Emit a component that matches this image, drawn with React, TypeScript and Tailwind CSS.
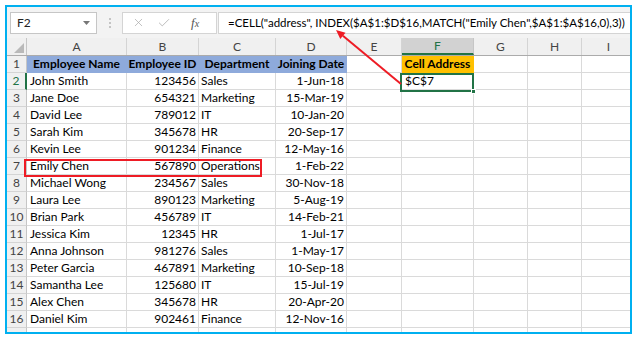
import React from "react";
import clsx from "clsx";
import { X, Check } from "lucide-react";

// Sheet data
const rows: [string, string, string, string][] = [
	["John Smith", "123456", "Sales", "1-Jun-18"],
	["Jane Doe", "654321", "Marketing", "15-Mar-19"],
	["David Lee", "789012", "IT", "10-Jan-20"],
	["Sarah Kim", "345678", "HR", "20-Sep-17"],
	["Kevin Lee", "901234", "Finance", "12-May-16"],
	["Emily Chen", "567890", "Operations", "1-Feb-22"],
	["Michael Wong", "234567", "Sales", "30-Nov-18"],
	["Laura Lee", "890123", "Marketing", "5-Aug-19"],
	["Brian Park", "456789", "IT", "14-Feb-21"],
	["Jessica Kim", "12345", "HR", "1-Jul-17"],
	["Anna Johnson", "981276", "Sales", "1-May-17"],
	["Peter Garcia", "467891", "Marketing", "10-Sep-18"],
	["Samantha Lee", "125680", "IT", "15-Jul-19"],
	["Alex Chen", "345678", "HR", "20-Apr-20"],
	["Daniel Kim", "902461", "Finance", "12-Nov-16"],
];

const letters = ["A", "B", "C", "D", "E", "F", "G", "H", "I"];
const colW = [
	"w-[100px]",
	"w-[72px]",
	"w-[77px]",
	"w-[71px]",
	"w-[55px]",
	"w-[72px]",
	"w-[54px]",
	"w-[54px]",
	"w-[54px]",
];

const FormulaBar = () => (
	<div className="flex h-[31px] shrink-0 items-center bg-[#f3f3f3] pl-[3px]">
		<div className="flex h-[22px] w-[87px] shrink-0 items-center justify-between border border-[#c6c6c6] bg-white pl-[6px] pr-[6px] text-[12px] text-[#222]">
			<span>F2</span>
			<svg width="7" height="4" viewBox="0 0 7 4">
				<polygon points="0,0 7,0 3.5,4" fill="#777" />
			</svg>
		</div>
		<div className="flex w-[25px] shrink-0 flex-col items-center gap-[2px]">
			<span className="h-[2px] w-[2px] bg-[#c4c4c4]" />
			<span className="h-[2px] w-[2px] bg-[#c4c4c4]" />
			<span className="h-[2px] w-[2px] bg-[#c4c4c4]" />
		</div>
		<div className="flex h-[22px] w-[95px] shrink-0 items-center border border-[#d4d4d4] bg-white">
			<X size={13} strokeWidth={1.3} className="ml-[9px] text-[#a8a8a8]" />
			<Check size={14} strokeWidth={1.3} className="ml-[12px] text-[#a8a8a8]" />
			<span className="ml-[20px] font-['Liberation_Serif'] text-[13px] italic text-[#555]">
				f<span className="text-[10px]">x</span>
			</span>
		</div>
		<div className="ml-[1px] flex h-[22px] min-w-0 flex-1 items-center overflow-hidden border border-r-0 border-[#d4d4d4] bg-white pl-[9px] text-[11.5px] whitespace-nowrap text-black">
			=CELL("address", INDEX($A$1:$D$16,MATCH("Emily Chen",$A$1:$A$16,0),3))
		</div>
	</div>
);

const ColumnHeaders = () => (
	<div className="flex h-[18px] shrink-0 border-b border-[#ababab] bg-[#f0f0f0] text-[12px]">
		<div className="relative w-[20px] shrink-0 border-r border-[#c6c6c6]">
			<svg className="absolute right-[2px] bottom-[2px]" width="10" height="10" viewBox="0 0 10 10">
				<polygon points="10,0 10,10 0,10" fill="#b9b9b9" />
			</svg>
		</div>
		{letters.map((l, i) => (
			<div
				key={l}
				className={clsx(
					colW[i],
					"flex shrink-0 items-center justify-center border-r",
					l === "F"
						? "border-b-2 border-[#c6c6c6] border-b-[#217346] bg-[#d2d2d2] text-[#217346]"
						: "border-[#d4d4d4] text-[#444]",
				)}
			>
				{l}
			</div>
		))}
	</div>
);

const RowHead = ({ n }: { n: number }) => (
	<div
		className={clsx(
			"flex w-[20px] shrink-0 items-center justify-center border-b border-[#d4d4d4] bg-[#f0f0f0] text-[#444]",
			n === 2 ? "border-r-2 border-r-[#217346] bg-[#d2d2d2] text-[#217346]" : "border-r border-r-[#c6c6c6]",
		)}
	>
		{n}
	</div>
);

const Cell = ({
	i,
	children,
	className,
}: {
	i: number;
	children?: React.ReactNode;
	className?: string;
}) => (
	<div
		className={clsx(
			colW[i],
			"flex shrink-0 items-center overflow-visible border-r border-b whitespace-nowrap",
			className ?? "border-[#dadada]",
		)}
	>
		{children}
	</div>
);

export default function App() {
	return (
		<div className="relative h-[343px] w-[640px] overflow-hidden bg-white font-['Lato'] text-[12px] text-black">
			<div className="relative mt-[5px] ml-[5px] flex h-[329px] w-[627px] flex-col overflow-hidden border-2 border-[#00b0f0]">
				<FormulaBar />
				<ColumnHeaders />

				{/* Row 1 - headers */}
				<div className="flex h-[17px] shrink-0">
					<RowHead n={1} />
					{["Employee Name", "Employee ID", "Department", "Joining Date"].map((t, i) => (
						<Cell key={t} i={i} className="justify-center border-[#8eaadb] bg-[#8eaadb] font-bold">
							{t}
						</Cell>
					))}
					<Cell i={4} />
					<Cell i={5} className="justify-center border-[#ffc000] bg-[#ffc000] font-bold">
						Cell Address
					</Cell>
					<Cell i={6} />
					<Cell i={7} />
					<Cell i={8} />
				</div>

				{rows.map((r, idx) => (
					<div key={idx} className="flex h-[17px] shrink-0">
						<RowHead n={idx + 2} />
						<Cell i={0} className="border-[#dadada] pl-[3px]">
							{r[0]}
						</Cell>
						<Cell i={1} className="justify-end border-[#dadada] pr-[2px]">
							{r[1]}
						</Cell>
						<Cell i={2} className="border-[#dadada] pl-[2px]">
							{r[2]}
						</Cell>
						<Cell i={3} className="justify-end border-[#dadada] pr-[2px]">
							{r[3]}
						</Cell>
						<Cell i={4} />
						<Cell i={5} className="border-[#dadada] pl-[3px]">
							{idx === 0 ? "$C$7" : null}
						</Cell>
						<Cell i={6} />
						<Cell i={7} />
						<Cell i={8} />
					</div>
				))}

				{/* partial row 17 */}
				<div className="flex h-[17px] shrink-0">
					<div className="w-[20px] shrink-0 border-r border-[#c6c6c6] bg-[#f0f0f0]" />
					{letters.map((l, i) => (
						<Cell key={l} i={i} />
					))}
				</div>

				{/* selected cell F2 */}
				<div className="absolute top-[66px] left-[393px] h-[19px] w-[74px] border-2 border-[#217346]">
					<div className="absolute -right-[4px] -bottom-[4px] h-[5px] w-[5px] border border-white bg-[#217346]" />
				</div>

				{/* highlight around Emily Chen */}
				<div className="absolute top-[152px] left-[17px] h-[18px] w-[238px] border-2 border-[#ee1c25]" />
			</div>

			{/* arrow */}
			<svg className="pointer-events-none absolute inset-0" width="640" height="343">
				<line x1="401" y1="84" x2="342.9" y2="35.8" stroke="#ee1c25" strokeWidth="2" />
				<polygon points="336,30 345.5,32.7 340.3,38.9" fill="#ee1c25" />
			</svg>
		</div>
	);
}
